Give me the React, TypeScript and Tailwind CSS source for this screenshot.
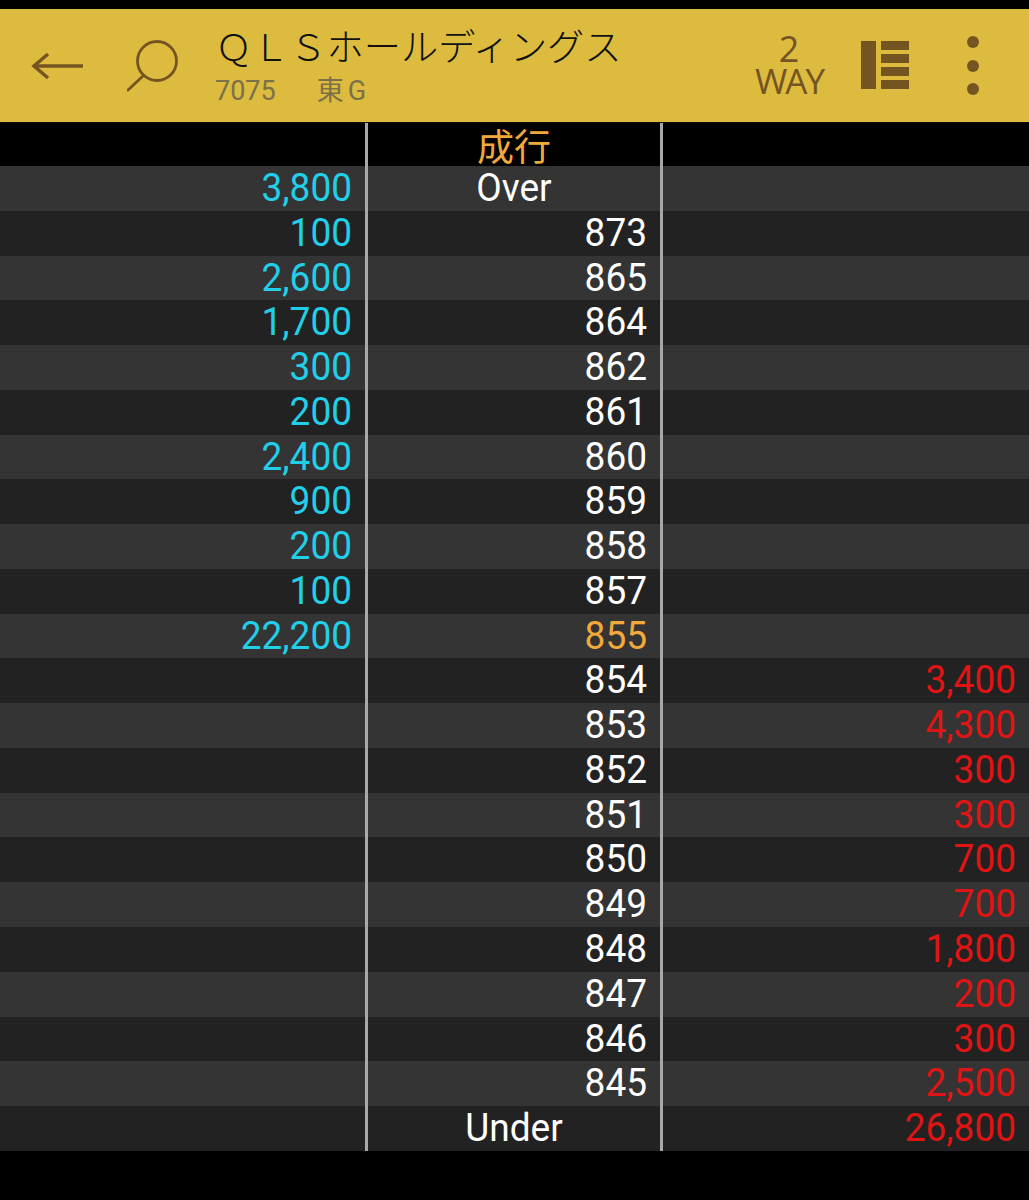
const rows: { left?: string; price: string; right?: string; current?: boolean }[] = [
  { left: '3,800', price: 'Over' },
  { left: '100', price: '873' },
  { left: '2,600', price: '865' },
  { left: '1,700', price: '864' },
  { left: '300', price: '862' },
  { left: '200', price: '861' },
  { left: '2,400', price: '860' },
  { left: '900', price: '859' },
  { left: '200', price: '858' },
  { left: '100', price: '857' },
  { left: '22,200', price: '855', current: true },
  { price: '854', right: '3,400' },
  { price: '853', right: '4,300' },
  { price: '852', right: '300' },
  { price: '851', right: '300' },
  { price: '850', right: '700' },
  { price: '849', right: '700' },
  { price: '848', right: '1,800' },
  { price: '847', right: '200' },
  { price: '846', right: '300' },
  { price: '845', right: '2,500' },
  { price: 'Under', right: '26,800' },
];

function Row({ left, price, right, current, odd }: (typeof rows)[number] & { odd: boolean }) {
  const isLabel = price === 'Over' || price === 'Under';
  return (
    <div className={`grid grid-cols-[365px_3px_292px_3px_1fr] h-[44.77px] items-stretch ${odd ? 'bg-[#343434]' : 'bg-[#222222]'}`}>
      <div className="flex items-center justify-end pr-[13px] text-[#22cfe8] scale-y-[1.07]">{left}</div>
      <div className="bg-[#a8a8a8]" />
      <div className={`flex items-center scale-y-[1.07] ${isLabel ? 'justify-center' : 'justify-end pr-[13px]'} ${current ? 'text-[#f2a93b]' : 'text-white'}`}>
        {price}
      </div>
      <div className="bg-[#a8a8a8]" />
      <div className="flex items-center justify-end pr-[13px] text-[#e01414] scale-y-[1.07]">{right}</div>
    </div>
  );
}

export default function App() {
  return (
    <div className="w-[1029px] h-[1200px] bg-black overflow-hidden pt-[9px] font-['Roboto','Noto_Sans_CJK_JP',sans-serif]">
      <header className="h-[113px] bg-[#dcbb3f] flex items-center text-[#745522]">
        <div className="w-[108px] pl-[31px] flex items-center">
          <svg width="52" height="28" viewBox="0 0 52 28" fill="none" stroke="#745522" strokeWidth="3.5">
            <path d="M52 14H3" />
            <path d="M17 2 3 14l14 12" />
          </svg>
        </div>
        <div className="w-[110px] pl-[19px] flex items-center">
          <svg width="52" height="52" viewBox="0 0 52 52" fill="none" stroke="#745522" strokeWidth="2.8">
            <circle cx="30" cy="21" r="19.5" />
            <path d="M16 36 1 50" strokeLinecap="round" />
          </svg>
        </div>
        <div className="flex-1 flex flex-col mt-[2px]">
          <div className="text-[37.2px] leading-[40px] -ml-[3px] -mt-[2px] text-[#111111] font-['Noto_Sans_CJK_JP',sans-serif] font-light">ＱＬＳホールディングス</div>
          <div className="flex text-[27px] leading-[30px] mt-[11px] text-[#7b7048] gap-[41px] -ml-[3px]">
            <span>7075</span>
            <span className="tracking-[4px]">東G</span>
          </div>
        </div>
        <div className="w-[70px] mr-[37px] -ml-[6px] -mt-[2px] flex flex-col items-center text-[36px] leading-[32px] font-['Open_Sans',sans-serif]">
          <span>2</span>
          <span className="tracking-[-2px] text-[35px]">WAY</span>
        </div>
        <svg width="48" height="48" viewBox="0 0 48 48" fill="#745522" className="mr-[58px] -mt-[1px]">
          <rect x="0" y="0" width="15" height="48" />
          <rect x="20" y="0" width="28" height="9" />
          <rect x="20" y="13" width="28" height="9" />
          <rect x="20" y="26" width="28" height="9" />
          <rect x="20" y="39" width="28" height="9" />
        </svg>
        <div className="flex flex-col gap-[11.5px] mr-[50px]">
          <span className="w-[12px] h-[12px] rounded-full bg-[#745522]" />
          <span className="w-[12px] h-[12px] rounded-full bg-[#745522]" />
          <span className="w-[12px] h-[12px] rounded-full bg-[#745522]" />
        </div>
      </header>
      <div className="text-[37px] leading-[36px]">
        <div className="grid grid-cols-[365px_3px_292px_3px_1fr] h-[44px] border-t border-[#111111]">
          <div />
          <div className="bg-[#a8a8a8]" />
          <div className="flex justify-center items-center text-[#f2a93b] font-['Noto_Sans_CJK_JP',sans-serif]">成行</div>
          <div className="bg-[#a8a8a8]" />
          <div />
        </div>
        {rows.map((r, i) => (
          <Row key={r.price} {...r} odd={i % 2 === 0} />
        ))}
      </div>
    </div>
  );
}
